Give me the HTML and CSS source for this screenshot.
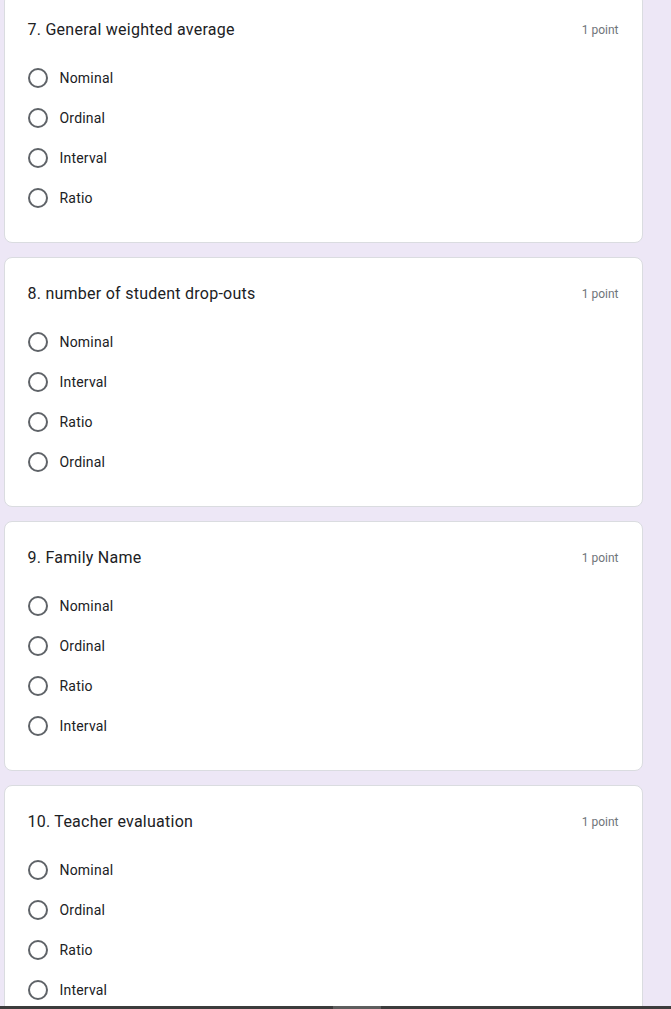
FILE: index.html
```html
<!DOCTYPE html>
<html lang="en">
<head>
<meta charset="utf-8">
<title>Quiz</title>
<link rel="stylesheet" href="styles.css">
</head>
<body>
<main class="form">
  <section class="card card-first">
    <div class="q-head"><span class="q-title">7. General weighted average</span><span class="q-points">1 point</span></div>
    <div class="options">
      <label class="opt"><span class="radio"></span><span class="opt-text">Nominal</span></label>
      <label class="opt"><span class="radio"></span><span class="opt-text">Ordinal</span></label>
      <label class="opt"><span class="radio"></span><span class="opt-text">Interval</span></label>
      <label class="opt"><span class="radio"></span><span class="opt-text">Ratio</span></label>
    </div>
  </section>
  <section class="card">
    <div class="q-head"><span class="q-title">8. number of student drop-outs</span><span class="q-points">1 point</span></div>
    <div class="options">
      <label class="opt"><span class="radio"></span><span class="opt-text">Nominal</span></label>
      <label class="opt"><span class="radio"></span><span class="opt-text">Interval</span></label>
      <label class="opt"><span class="radio"></span><span class="opt-text">Ratio</span></label>
      <label class="opt"><span class="radio"></span><span class="opt-text">Ordinal</span></label>
    </div>
  </section>
  <section class="card">
    <div class="q-head"><span class="q-title">9. Family Name</span><span class="q-points">1 point</span></div>
    <div class="options">
      <label class="opt"><span class="radio"></span><span class="opt-text">Nominal</span></label>
      <label class="opt"><span class="radio"></span><span class="opt-text">Ordinal</span></label>
      <label class="opt"><span class="radio"></span><span class="opt-text">Ratio</span></label>
      <label class="opt"><span class="radio"></span><span class="opt-text">Interval</span></label>
    </div>
  </section>
  <section class="card">
    <div class="q-head"><span class="q-title">10. Teacher evaluation</span><span class="q-points">1 point</span></div>
    <div class="options">
      <label class="opt"><span class="radio"></span><span class="opt-text">Nominal</span></label>
      <label class="opt"><span class="radio"></span><span class="opt-text">Ordinal</span></label>
      <label class="opt"><span class="radio"></span><span class="opt-text">Ratio</span></label>
      <label class="opt"><span class="radio"></span><span class="opt-text">Interval</span></label>
    </div>
  </section>
</main>
<div class="hscroll"><div class="hscroll-thumb"></div></div>
</body>
</html>
```
FILE: styles.css
```css
html, body {
  margin: 0;
  padding: 0;
  background: #ede7f6;
  overflow: hidden;
}
body {
  height: 1009px;
  font-family: Roboto, "Liberation Sans", Arial, sans-serif;
  color: #202124;
}
.form {
  width: 639px;
  margin-left: 3.5px;
  display: flex;
  flex-direction: column;
  gap: 14px;
}
.card {
  box-sizing: border-box;
  height: 250px;
  background: #fff;
  border: 1px solid #dadce0;
  border-radius: 8px;
  padding: 23px 23px 0 23px;
}
.card-first {
  margin-top: -7px;
}
.q-head {
  display: flex;
  justify-content: space-between;
  align-items: center;
  height: 24px;
  margin-top: 1px;
}
.q-title {
  font-size: 16px;
  letter-spacing: 0.25px;
  line-height: 24px;
}
.q-points {
  font-size: 12px;
  color: #70757a;
  line-height: 16px;
}
.options {
  margin-top: 16px;
  display: flex;
  flex-direction: column;
}
.opt {
  display: flex;
  align-items: center;
  height: 40px;
}
.radio {
  box-sizing: border-box;
  width: 20px;
  height: 20px;
  border: 2px solid #5f6368;
  border-radius: 50%;
  margin-right: 12px;
  flex: none;
}
.opt-text {
  font-size: 14px;
  letter-spacing: 0.2px;
}
.hscroll {
  position: fixed;
  left: 0;
  right: 0;
  bottom: 0;
  height: 3px;
  background: #3c3c3c;
}
.hscroll-thumb {
  position: absolute;
  left: 333px;
  width: 48px;
  top: 0;
  bottom: 0;
  background: #5e5e5e;
}
```
